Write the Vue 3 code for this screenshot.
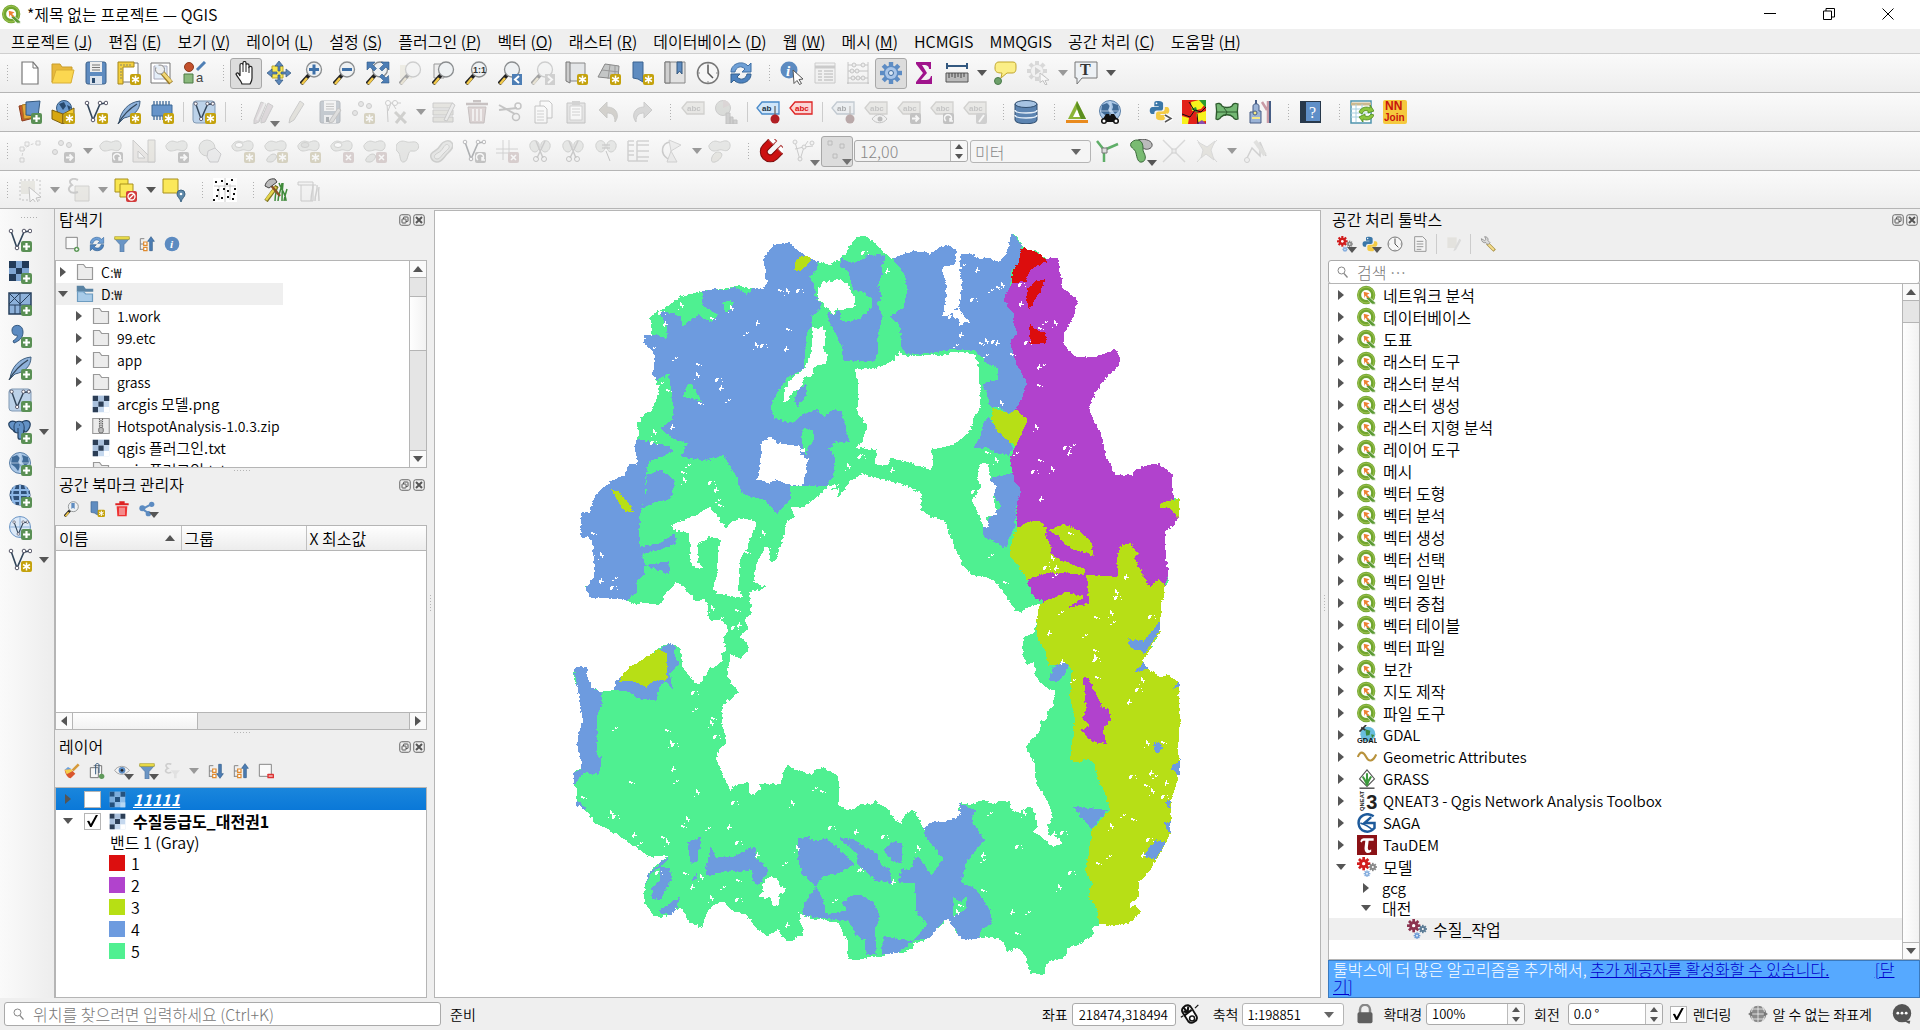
<script setup>
import { h } from 'vue'

const badge = (fill, inner) => `<rect x="13" y="13" width="11" height="11" rx="2" fill="${fill}"/>${inner}`
const star = badge('#c4a20c', '<path d="M18.500 14.500v8M15 16.500l7 4M22 16.500l-7 4" stroke="#fff" stroke-width="1.500"/>')
const plus = badge('#5a9055', '<path d="M18.500 15v7M15 18.500h7" stroke="#fff" stroke-width="2.200"/>')
const cross = badge('#d88', '<path d="M16 16l5 5M21 16l-5 5" stroke="#fff" stroke-width="1.600"/>')
const arrowBadge = badge('#777', '<path d="M15 18.500h6M18.500 15.500l3 3-3 3" stroke="#fff" stroke-width="1.800" fill="none"/>')
const turnBadge = badge('#777', '<path d="M16 21a3.500 3.500 0 1 1 4 0M20 18v3h3" stroke="#fff" stroke-width="1.500" fill="none"/>')
const mag = '<path d="M9 14l-8 9" stroke="#222" stroke-width="4"/><path d="M7 17l-5 6" stroke="#f2c94c" stroke-width="2.500"/><circle cx="14" cy="8.500" r="7.500" fill="#eef1f3" stroke="#8a8d8f" stroke-width="1.300"/>'
const vee = '<path d="M3 3l6 17 7-16 6-1" stroke="#33475b" stroke-width="1.600" fill="none"/><g fill="#fff" stroke="#556" stroke-width="1"><circle cx="3" cy="3" r="1.800"/><circle cx="9" cy="20" r="1.800"/><circle cx="16" cy="3" r="1.800"/><circle cx="22" cy="3" r="1.800"/></g>'
const disk = '<rect x="2" y="1" width="20" height="22" rx="2" fill="#5e8bc0" stroke="#3c6189"/><path d="M6 1h12v10H6z" fill="#eee"/><path d="M8 4h8M8 6.500h8M8 9h8" stroke="#777"/><path d="M6 15h12v8H6z" fill="#dce4ee"/><path d="M8 17h3v5H8z" fill="#2c4c70"/>'
const blob = '<path d="M2 5c3-4 7-3 9-2s4-2 8-1 4 7 1 9-6-1-9 0-7 2-9-1-1-4 0-5z" fill="#c9cfc6" stroke="#8f968c"/>'
const ring = '<ellipse cx="8" cy="6" rx="4" ry="2.500" fill="#fff" stroke="#8f968c"/>'
const dots = '<g fill="#ccc" stroke="#888"><circle cx="4" cy="13" r="2.500"/><circle cx="10" cy="4" r="2.500"/><circle cx="18" cy="6" r="2.500"/></g>'
const tag = (fill, stroke, color, label = 'abc') => `<path d="M1 8l5-6h17v12H6z" fill="${fill}" stroke="${stroke}" stroke-width="1.300"/><text x="6" y="11" font-size="8" font-family="Liberation Sans, sans-serif" font-weight="bold" fill="${color}">${label}</text>`
const greyTag = tag('#d6d3bf', '#9a9784', '#777')
const globe = '<circle cx="12" cy="11" r="10.500" fill="#a8c6e6" stroke="#5b80a8"/><path d="M4 5l5-2 3 3-2 4 3 3-3 6-3-4-4-3zM14 3l6 2 1 6-4 3-3-4 1-3z" fill="#3f6b98"/><path d="M2 11h20M12 1v20" stroke="#d5e4f4" stroke-width=".7"/>'
const scissors = '<path d="M8 2l7 17M17 2L9 19" stroke="#888" stroke-width="1.500"/><circle cx="8" cy="20" r="2.500" fill="none" stroke="#777"/><circle cx="16" cy="20" r="2.500" fill="none" stroke="#777"/>'
const leaves = '<path d="M2 5c2-5 8-4 9 0s-1 8-4 8-6-4-5-8zM22 5c-2-5-8-4-9 0s1 8 4 8 6-4 5-8z" fill="#c9cfc6" stroke="#8f968c"/>'
const feather = '<path d="M2 23C3 12 11 2 23 1c0 9-6 15-16 17z" fill="#8fb2da" stroke="#3f5f80"/><path d="M1 24C6 15 12 9 20 4" stroke="#33475b" fill="none" stroke-width="1.300"/>'
const python = '<path d="M6 8V3c0-2 2-2 5-2s5 1 5 3v5c0 2-1 3-3 3H9c-2 0-3 1-3 4H3c-3-1-3-8 1-8h7V7H6z" fill="#3b77a8"/><path d="M18 8h3c3 1 3 8-1 8h-7v1h5v4c0 2-2 2-5 2s-5-1-5-3v-4c0-2 1-3 3-3h4c2 0 3-1 3-5z" fill="#f4cb45"/><circle cx="8.500" cy="3.800" r="1" fill="#fff"/>'
const cog = (cx, cy, r, c) => {
  let teeth = ''
  for (let k = 0; k < 4; k++) teeth += `<rect x="${cx - r}" y="${cy - r * 0.2}" width="${r * 2}" height="${r * 0.4}" transform="rotate(${k * 45} ${cx} ${cy})" fill="${c}"/>`
  return `${teeth}<circle cx="${cx}" cy="${cy}" r="${r * 0.68}" fill="${c}"/><circle cx="${cx}" cy="${cy}" r="${r * 0.25}" fill="#fff"/>`
}
const tree = '<path d="M2 4v17M2 4h6M2 12h6M2 20h6" stroke="#888" stroke-width="1.500"/><g fill="#fff" stroke="#e08a2e" stroke-width="1.800"><path d="M7 9h5v5H7zM7 17h5v5H7z"/></g>'
const funnel = '<path d="M1 4h22l-8 9v11h-6V13z" fill="#6a95c5" stroke="#557aa3"/><path d="M1 1h22v4H1z" fill="#f0e14a" stroke="#a89c2a"/>'
const checker = '<path d="M1 1h22v22H1z" fill="#c5d8ee"/><path d="M1 1h7v7H1zM16 1h7v7h-7zM8.500 8.500h7v7h-7zM1 16h7v7H1z" fill="#2c3e56"/><path d="M8 1h8v7H8zM1 8h7v8H1z" fill="#a9c0dc"/><path d="M16 16h7v7h-7z" fill="#fff"/>'
const folder = '<path d="M2 22V2h8l3 4h9v16z" fill="#ececec" stroke="#999" stroke-width="1.600"/>'

const icons = {
  qgis: '<circle cx="11" cy="12" r="8.500" fill="none" stroke="#6fa52f" stroke-width="5"/><circle cx="11" cy="12" r="9.500" fill="none" stroke="#97bd4a" stroke-width="1.500"/><path d="M12 12l10 9v2h-4l-7-7z" fill="#5c9a35" stroke="#fff" stroke-width=".8"/><path d="M8 8l7 2-3 2 3 3-2 1-3-3-1 3z" fill="#ee8033"/>',
  newf: '<path d="M4 1h11l5 6v16H4z" fill="#fff" stroke="#777" stroke-width="1.200"/><path d="M15 1v6h5" fill="none" stroke="#777"/>',
  open: '<path d="M1 21V3h8l2 3h10v4H6z" fill="#e8b83b" stroke="#c99d2a"/><path d="M5 9h18l-3 13H1z" fill="#fbd750" stroke="#d8ae35"/>',
  save: disk,
  layout: '<path d="M5 2h16v19H5z" fill="#fff" stroke="#777"/><path d="M1 1h16v5H6v17H1z" fill="#f4d03f" stroke="#a5861c"/><path d="M4 3v2M7 3v2M10 3v2M13 3v2M3 8h2M3 11h2M3 14h2M3 17h2" stroke="#886"/>' + star,
  layman: '<path d="M1 2h19v20H1z" fill="#fff" stroke="#777"/><path d="M4 5h13v13H4z" fill="#e4eef8" stroke="#aab"/><path d="M11 10l10 12" stroke="#9a7a26" stroke-width="5"/><path d="M12 11l9 10" stroke="#f2d775" stroke-width="3"/><circle cx="10" cy="8.500" r="4.500" fill="#eee" stroke="#888"/><path d="M6 4l4 4" stroke="#e4eef8" stroke-width="3"/>',
  style: '<circle cx="6" cy="6" r="4.500" fill="#c4512d" stroke="#8d3a1e"/><path d="M14 9l8-8" stroke="#4f7fb5" stroke-width="3"/><path d="M1 13h9v9H1z" fill="#8ab87c" stroke="#4d7a45"/><text x="13" y="21" font-size="13" font-family="Liberation Sans, sans-serif" fill="#444">a</text>',
  pan: '<path d="M8 23c-1-4-5-7-6-10 1-2 3-1 4 2V4c0-2 3-2 3 0V2c0-2 3-2 3 0v2c0-2 3-1 3 0v2c1-1 3-1 3 1v10c0 3-1 4-2 6z" fill="#fff" stroke="#222" stroke-width="1.200"/><path d="M9 4v7M12 4v7M15 6v6" stroke="#222"/>',
  panTo: '<path d="M5 5h11v12H5z" fill="#f9e64f" stroke="#b9a62f"/><path d="M12 0l4 5h-3v5h-2V5H8zM12 24l4-5h-3v-5h-2v5H8zM0 12l5-4v3h5v2H5v3zM24 12l-5-4v3h-5v2h5v3z" fill="#5b87bb" stroke="#34587f" stroke-width=".7"/>',
  zin: mag + '<path d="M14 3.500v10M9 8.500h10" stroke="#3d70a8" stroke-width="3"/>',
  zout: mag + '<path d="M9 8.500h10" stroke="#3d70a8" stroke-width="3"/>',
  zfull: mag + '<path d="M1 1h8L6.500 3.500l4 4-2.500 2.500-4-4L1 9zM23 1h-8l2.500 2.500-4 4 2.500 2.500 4-4L23 9zM23 22h-8l2.500-2.500-4-4 2.500-2.500 4 4 2.500-2.500z" fill="#4d7eb5" stroke="#2d5988" stroke-width=".6"/>',
  zsel: '<path d="M1 4h12v14H1z" fill="#eadf9c"/>' + mag,
  zlayer: '<path d="M2 3h10v14H2z" fill="#eee" stroke="#999"/>' + mag,
  znative: mag + '<text x="8" y="12" font-size="9" font-weight="bold" font-family="Liberation Sans, sans-serif" fill="#333">1:1</text>',
  zlast: mag + '<path d="M14 13h10v11H14z" fill="#4d7eb5"/><path d="M21 15l-4 3.500 4 3.500" stroke="#fff" stroke-width="2" fill="none"/>',
  znext: mag + '<path d="M14 13h10v11H14z" fill="#999"/><path d="M17 15l4 3.500-4 3.500" stroke="#fff" stroke-width="2" fill="none"/>',
  newmap: '<path d="M3 2h18v18H6z" fill="#e4e6e8" stroke="#888"/><path d="M2 1h4v21l-4-2z" fill="#ccc" stroke="#777"/>' + star,
  new3d: '<path d="M8 3l14 2-1 13-20-2z" fill="#c4c6c6" stroke="#888"/><path d="M5 9l17 2M13 4l-2 14M18 4v13" stroke="#999" fill="none"/>' + star,
  bkm: '<path d="M3 1h10v20l-5-3-5-1z" fill="#5f8cc0" stroke="#3b6391"/>' + star,
  bkms: '<path d="M2 1h20v21H2z" fill="#e2e2e2" stroke="#888"/><path d="M2 1h5v21H2z" fill="#cfcfcf" stroke="#777"/><path d="M14 1h5v12l-2.500-3L14 13z" fill="#5f8cc0" stroke="#34587f"/>',
  clock: '<circle cx="12" cy="12" r="10.500" fill="#f6f6f6" stroke="#777" stroke-width="1.500"/><path d="M12 4v8l5 5" stroke="#555" stroke-width="1.500" fill="none"/><path d="M12 2v2M12 20v2M2 12h2M20 12h2" stroke="#888"/>',
  refresh: '<path d="M2 11C2 2 14-1 19 5l3-3v9h-9l3-3C12 4 7 6 6 11z" fill="#6fa0d6" stroke="#3d6ea5"/><path d="M22 13c0 9-12 12-17 6l-3 3v-9h9l-3 3c4 4 9 2 10-3z" fill="#4d82bf" stroke="#34618f"/>',
  ident: '<circle cx="9" cy="9" r="8.500" fill="#5c8bc1"/><text x="6" y="15" font-size="15" font-style="italic" font-weight="bold" font-family="Liberation Serif, serif" fill="#fff">i</text><path d="M13 9l10 9-4 .5 2.500 4-2 1-2.500-4-3 3z" fill="#fff" stroke="#555"/>',
  table: '<path d="M2 2h20v20H2z" fill="#eee" stroke="#888"/><path d="M2 6h20" stroke="#888" stroke-width="3"/><path d="M5 10h4M5 13h4M5 16h4M5 19h4M11 10h9M11 13h9M11 16h9M11 19h9" stroke="#888" stroke-width="1.500"/>',
  abacus: '<path d="M2 1v22M22 1v22M1 22h22M2 4h20M2 10h20M2 17h20" stroke="#777" fill="none"/><g fill="#ddd" stroke="#777"><circle cx="8" cy="4" r="2"/><circle cx="17" cy="4" r="2"/><circle cx="6" cy="10" r="2"/><circle cx="11" cy="10" r="2"/><circle cx="7" cy="17" r="2"/><circle cx="12" cy="17" r="2"/><circle cx="17" cy="17" r="2"/></g>',
  gear: cog(12, 12, 11, '#5d8cc4') + '<circle cx="12" cy="12" r="6" fill="#a9c5e8"/><circle cx="12" cy="12" r="2.500" fill="#dce8f6" stroke="#3e6ca0"/>',
  sigma: '<path d="M4 1h15v7h-2c0-3-2-4-5-4h-2l5 8-6 7h4c4 0 5-1 6-4h1v8H4v-2l7-9-7-9z" fill="#a0148c"/>',
  ruler: '<path d="M2 5h20M2 2v6M22 2v6" stroke="#33587f" stroke-width="2"/><path d="M1 12h22v9H1z" fill="#bbb" stroke="#555"/><path d="M4 12v5M7 12v4M10 12v5M13 12v4M16 12v5M19 12v4" stroke="#444"/>',
  tip: '<path d="M6 1h14c3 0 3 2 3 5s0 6-4 6h-5l-6 5 1-5c-5 0-7-1-7-5s1-6 4-6z" fill="#fbee87" stroke="#c0a52c"/><circle cx="5" cy="20" r="3.500" fill="#6da06a" stroke="#4a7a4a"/>',
  action: cog(11, 10, 10, '#aaa') + '<circle cx="11" cy="10" r="6" fill="#eee"/><path d="M9 6l6 4-6 4z" fill="#999"/><path d="M14 12l9 7-4 .5 2 4h-2l-2-4-3 2z" fill="#fff" stroke="#777"/>',
  textann: '<path d="M1 1h22v16H8l-5 6v-6H1z" fill="#edf1f5" stroke="#777"/><text x="6" y="14" font-size="16" font-weight="bold" font-family="Liberation Serif, serif" fill="#333">T</text>',
  dsm: '<path d="M1 6l12-2 3 14-12 3z" fill="#c6592e" stroke="#8d3d1c"/><path d="M4 5l12-2 2 14-12 2z" fill="#e7a93c" stroke="#a87820"/><path d="M8 2l14-1-2 15-12-1z" fill="#6794c9" stroke="#35597f"/>' + plus,
  globebox: '<circle cx="13" cy="8" r="7.500" fill="#6c9bcf" stroke="#34587f"/><path d="M8 4l5-2 2 4-3 4zM16 5l4 2-2 4z" fill="#27496d"/><path d="M1 10l11 4v10L1 19z" fill="#d7a711" stroke="#7d6110"/><path d="M12 14l11-6v10l-11 6z" fill="#f3cb35" stroke="#7d6110"/>' + star,
  vnew: vee + star,
  vplus: vee + plus,
  feather: feather + star,
  featherPlus: feather + plus,
  chip: '<path d="M2 5h20v11H2z" fill="#6794c9" stroke="#3d6897"/><path d="M4 1v4M7 1v4M10 1v4M13 1v4M16 1v4M19 1v4M4 16v4M7 16v4M10 16v4M13 16v4" stroke="#3d6897" stroke-width="1.300"/>' + star,
  vbox: '<rect x="1" y="1" width="22" height="22" rx="3" fill="#bcd2e9" stroke="#8199b3"/><g transform="translate(1 1) scale(.9)">' + vee + '</g>' + star,
  vboxPlus: '<rect x="1" y="1" width="22" height="22" rx="3" fill="#bcd2e9" stroke="#8199b3"/><g transform="translate(1 1) scale(.9)">' + vee + '</g>' + plus,
  pencils: '<path d="M2 20L9 2l5 2-7 18-5 2zM9 20l7-17 5 3-8 16-4 1z" fill="#a58" fill-opacity=".5" stroke="#888"/><path d="M5 20l8-17" stroke="#ddd" stroke-width="2"/>',
  pencil: '<path d="M5 18L15 1l4 3L9 20l-5 3z" fill="#cfc59a" stroke="#888"/>',
  saveedit: disk + '<path d="M12 20l8-12 3 2-8 12-4 1z" fill="#bbb" stroke="#777"/>',
  addpt: dots + star,
  vertex: '<path d="M3 3l1 19M7 3l-3 8M3 3h14M8 3l4 6" stroke="#888" fill="none"/><circle cx="4" cy="3" r="2.500" fill="#fff" stroke="#888"/><circle cx="11" cy="3" r="2.500" fill="#fff" stroke="#888"/><path d="M12 23l9-11M11 12l11 11" stroke="#998" stroke-width="3"/>',
  fields: '<path d="M1 3h20v5H1zM1 10h20v5H1zM1 17h20v5H1z" fill="#cfcaa5" stroke="#888"/><path d="M12 20L20 3l3 2-8 16z" fill="#ddd" stroke="#888"/>',
  trash: '<path d="M3 7h18l-2 16H5z" fill="#d99" stroke="#966"/><path d="M1 4h22M8 1h8" stroke="#966" stroke-width="2.500"/><path d="M8 9v12M12 9v12M16 9v12" stroke="#fff" stroke-width="1.500"/>',
  cut: '<path d="M1 5l16 9M1 10l18-2" stroke="#777" stroke-width="2"/><circle cx="20" cy="6" r="3" fill="none" stroke="#777" stroke-width="1.500"/><circle cx="18" cy="17" r="3.500" fill="none" stroke="#777" stroke-width="1.500"/>',
  copy: '<path d="M9 1h9l3 3v14H9z" fill="#fff" stroke="#777"/><path d="M4 6h9l3 3v14H4z" fill="#fff" stroke="#777"/><path d="M6 11h7M6 14h7M6 17h7M6 20h7" stroke="#999"/>',
  paste: '<path d="M3 3h18v20H3z" fill="#ccc" stroke="#777"/><path d="M6 6h12v14H6z" fill="#fff" stroke="#999"/><path d="M8 1h8v4H8z" fill="#999"/><path d="M8 9h8M8 12h8M8 15h8" stroke="#999"/>',
  undo: '<path d="M2 10l8-8v5c10 0 13 9 8 15 0-7-3-9-8-9v5z" fill="#a89878" stroke="#887"/>',
  redo: '<path d="M22 10l-8-8v5C4 7 1 16 6 22c0-7 3-9 8-9v5z" fill="#aaa" stroke="#888"/>',
  label: greyTag,
  diag: '<circle cx="9" cy="8" r="7.500" fill="#a9b9a0" stroke="#888"/><path d="M9 8V0a8 8 0 0 1 7 5z" fill="#c99"/><path d="M12 13h4v11h-4zM16 17h3v7h-3zM19 20h4v4h-4z" fill="#999" stroke="#777"/>',
  labpin: tag('#cfe6fa', '#4a8ac9', '#234', 'ab') + '<path d="M19 6v10" stroke="#777" stroke-width="1.500"/><circle cx="19" cy="19" r="4.500" fill="#b11f24"/>',
  labred: tag('#fbd5d5', '#d22', '#d11'),
  labeye: greyTag + '<path d="M8 19c4-6 11-6 15 0-4 5-11 5-15 0z" fill="#eee" stroke="#777"/><circle cx="16" cy="19" r="2.500" fill="#666"/>',
  labmove: greyTag + arrowBadge,
  labrot: greyTag + turnBadge,
  labedit: greyTag + badge('#999', '<path d="M16 22l5-7" stroke="#fff" stroke-width="2"/>'),
  db: '<path d="M1 4v16c0 5 22 5 22 0V4z" fill="#5c84b1" stroke="#2f4d6e"/><ellipse cx="12" cy="4" rx="11" ry="3.500" fill="#a6c3e2" stroke="#2f4d6e"/><path d="M1 10c0 4 22 4 22 0M1 15c0 4 22 4 22 0" stroke="#e3edf7" fill="none" stroke-width="1.500"/>',
  tri: '<path d="M12 1l9 18H3z" fill="#8bb437"/><path d="M12 9l3 8H8z" fill="#fff"/><path d="M12 1l9 18h-5L11 6z" fill="#5c8f1f"/><path d="M1 20h22v3H1z" fill="#e98a1d"/>',
  bino: globe + '<path d="M8 14h3l1 2 1-2h3l5 8H3z" fill="#111"/><circle cx="6" cy="21" r="3" fill="#111"/><circle cx="18" cy="21" r="3" fill="#111"/><circle cx="6" cy="21" r="1.500" fill="#fff"/><circle cx="18" cy="21" r="1.500" fill="#fff"/>',
  python: '<g transform="scale(.88)">' + python + '</g><path d="M16 15l6 3.500-6 3.500" fill="none" stroke="#fff" stroke-width="4"/><path d="M16 15l6 3.500-6 3.500" fill="none" stroke="#555" stroke-width="1.500"/>',
  pythonSmall: python,
  mosaic: '<path d="M0 0h24v24H0z" fill="#e22118"/><path d="M9 2l8-2 7 3-5 6-9 2zM0 16l7 2-1 6H0zM14 14l10-3v10l-8 1z" fill="#f7f21c"/><path d="M17 0h7v8zM9 9l5-2 2 6z" fill="#2c9a2e"/><path d="M14 24l6-4 4 4z" fill="#8a4fb0"/><path d="M0 14l8 3 5-7 6 2 5-5M12 10L7 2M15 14l1 10" stroke="#111" fill="none"/>',
  green: '<path d="M1 4c2-1 5-1 6 2 2 2 8 2 10 0 1-3 3-3 6-2-1 6-1 9 0 15-2 1-4 0-5-2-3-3-9-3-12 0-1 2-3 3-5 2 1-6 1-9 0-15z" fill="#74b874" stroke="#2c5a2c" stroke-width="1.300"/><path d="M2 12h20M9 8l3 4-2 4" stroke="#2c5a2c" fill="none"/>',
  robot: '<path d="M5 6c0-3 6-3 6 0v5h2v12H2V12h3z" fill="#9bb3d6" stroke="#465d85"/><path d="M8 0v4" stroke="#465d85" stroke-width="2"/><circle cx="7" cy="13" r="2" fill="#f5e886" stroke="#465d85"/><path d="M4 18h8" stroke="#f5e886" stroke-width="2"/><path d="M14 2l5 8M20 1v22" stroke="#c99aa5" stroke-width="2.500"/><path d="M22 1v22" stroke="#465d85" stroke-width="2"/>',
  help: '<path d="M1 1h21v22H1z" fill="#27384b"/><path d="M7 2h14v19H7z" fill="#5f8fc8"/><text x="10" y="18" font-size="16" font-family="Liberation Serif, serif" fill="#fff">?</text>',
  sheet: '<path d="M1 1h20v22H1z" fill="#fff" stroke="#4f94ad" stroke-width="1.500"/><path d="M1 4h20" stroke="#cbb98f" stroke-width="3"/><path d="M1 9h20M1 13h20M1 17h20M6 4v18M12 4v18" stroke="#a8d0e0"/><path d="M9 12c2-5 8-6 11-4V5l4 6-6 2v-2c-3-1-5 0-6 3zM24 15c-2 5-8 6-11 4v3l-4-5 6-3v2c3 1 5 0 6-2z" fill="#8cc63f" stroke="#4d8a1c" stroke-width=".8"/>',
  nn: '<rect width="24" height="24" rx="2" fill="#f5c93e"/><text x="2" y="10" font-size="12" font-weight="bold" font-family="Liberation Sans, sans-serif" fill="#c8140c">NN</text><text x="1" y="21" font-size="10" font-weight="bold" font-family="Liberation Sans, sans-serif" fill="#c8140c">Join</text>',
  arc: '<path d="M4 22C3 12 8 5 20 4" fill="none" stroke="#999" stroke-dasharray="3 2"/><g fill="#eee" stroke="#999"><path d="M2 19h4v4H2zM2 8h4v4H2zM7 3h4v4H7zM18 2h4v4h-4z"/></g>',
  ptmove: dots + arrowBadge,
  brot: blob + turnBadge,
  setsq: '<path d="M1 1v22h22zM6 12l7 7H6z" fill="#ddd0c0" fill-rule="evenodd" stroke="#888"/><path d="M16 1h7v22h-7z" fill="#ddd0a5" stroke="#888"/>',
  bscale: blob + arrowBadge,
  simplify: '<circle cx="9" cy="9" r="8" fill="#c9cfc6" stroke="#8f968c"/><path d="M10 12l7-3 6 6-3 8h-8l-3-5z" fill="#d5dbe2" stroke="#889"/>',
  bring: blob + ring + star,
  bpart: blob + '<path d="M3 20c3-5 7-6 9-4s-2 7-5 7-5 0-4-3z" fill="#c9cfc6" stroke="#8f968c"/>' + star,
  bfill: blob + '<ellipse cx="8" cy="6" rx="4" ry="2.500" fill="#b5bdb1" stroke="#8f968c"/>' + star,
  bringx: blob + ring + cross,
  bpartx: blob + '<path d="M3 20c3-5 7-6 9-4s-2 7-5 7-5 0-4-3z" fill="#c9cfc6" stroke="#8f968c"/>' + cross,
  reshape: '<path d="M1 5c3-4 7-3 10-2s9-2 11 2-1 8-6 7-3 10-8 11-3-8-6-10-2-6-1-8z" fill="#c9cfc6" stroke="#8f968c"/>',
  offset: '<path d="M3 14c3-3 5-2 8-7s9-7 12-3-2 8-5 11-5 8-10 8-8-6-5-9z" fill="#c9cfc6" stroke="#8f968c" stroke-width="1.500"/><path d="M6 16c3-3 5-2 8-7s5-4 6-2-2 4-5 7-4 6-7 6-3-3-2-4z" fill="#dde0d8" stroke="#8f968c"/>',
  vrot: vee + turnBadge,
  trimx: '<path d="M8 1v20M14 1v20M1 10h22M1 14h22" stroke="#999"/>' + cross,
  split1: leaves + scissors,
  merge: leaves + '<path d="M8 6h8M8 9h8M12 12l4 10" stroke="#777" fill="none"/>',
  combs: '<path d="M1 2h6M1 6h6M1 12h6M1 16h6M10 2h12M10 6h12M10 12h12M10 18h12M1 22h20M10 2v20M1 2v20" stroke="#999" fill="none" stroke-width="1.500"/>',
  rotp: '<path d="M8 20C-1 14 2 4 10 3" fill="none" stroke="#888" stroke-width="1.500"/><path d="M9 1l12 5-10 6zM11 12l6 11H7z" fill="#ddd" stroke="#999"/>',
  bsplit: blob + '<path d="M4 18c2-5 6-6 9-4s-2 8-6 9-4-2-3-5z" fill="#d8cfae" stroke="#8f968c"/>',
  magnet: '<g transform="rotate(45 12 12)"><path d="M2 5v8a10 10 0 0 0 20 0V5h-7v8a3 3 0 0 1-6 0V5z" fill="#cc1111" stroke="#7d0a0a"/><path d="M2 1h7v5H2zM15 1h7v5h-7z" fill="#fff" stroke="#a33"/></g>',
  snapv: '<path d="M3 3l5 18M12 8l-4 13M12 8l4-6M12 8l9-1M3 10l9-2" stroke="#888" fill="none"/><g fill="#eee" stroke="#888"><circle cx="3" cy="3" r="2"/><circle cx="12" cy="8" r="2"/><circle cx="8" cy="20" r="2"/><circle cx="20" cy="4" r="2"/></g>',
  snapd: '<g fill="#ddd" stroke="#888"><path d="M3 2h4v4H3zM15 5h4v4h-4zM8 15h4v4H8z"/></g>',
  topo: '<path d="M1 2l7 9v12M8 11l14-6" stroke="#5fae68" stroke-width="2.500" fill="none"/><path d="M6 9h5v5H6z" fill="#ddd" stroke="#777"/>',
  overlap: '<path d="M9 1c5-2 13 0 14 4s-4 6-7 5-9-6-7-9z" fill="#bbb" stroke="#555"/><path d="M2 4c3-4 9-4 11 0s0 7 2 10 2 8-2 9-5-4-6-9-7-5-5-10z" fill="#79bb72" stroke="#3a6a3a"/>',
  xsnap: '<path d="M1 1l22 22M23 1L1 23" stroke="#aaa" stroke-width="1.500"/><path d="M10 10h4v4h-4z" fill="#ddd" stroke="#999"/>',
  bolt: '<path d="M2 1l20 22M22 1L2 23" stroke="#aaa"/><path d="M3 3l9 5 8-6-4 9 3 10-8-6-5 4 2-8z" fill="#d0c8a0" stroke="#aaa"/>',
  trace: '<path d="M3 21l6-12 8 8V3l6 14" fill="none" stroke="#999" stroke-width="1.500"/><circle cx="4" cy="21" r="2.500" fill="#eee" stroke="#999"/><path d="M12 2l10 14" stroke="#c0c0b0" stroke-width="4"/>',
  select: '<path d="M2 2h20v20H2z" fill="none" stroke="#777" stroke-dasharray="2 2"/><path d="M3 3h14v13H3z" fill="#d6d0a8"/><path d="M11 9l12 10-5 1 2 4-2 1-3-4-3 3z" fill="#fff" stroke="#777"/>',
  eps: '<path d="M9 8h14v15H9z" fill="#ddd6b4" stroke="#998"/><path d="M12 2C6-1 1 3 6 7c-6 3-3 10 6 7" fill="none" stroke="#888" stroke-width="2"/>',
  desel: '<path d="M1 1h13v13H1z" fill="#f9e64f" stroke="#a8901c"/><path d="M6 6h13v13H6z" fill="#fbe85a" stroke="#a8901c"/><rect x="12" y="13" width="11" height="11" rx="2" fill="#d23b3b"/><circle cx="17.500" cy="18.500" r="3.500" fill="none" stroke="#fff" stroke-width="1.300"/><path d="M15 21l5-5" stroke="#fff" stroke-width="1.300"/>',
  selloc: '<path d="M1 1h15v14H1z" fill="#fbe85a" stroke="#a8901c"/><path d="M19 24c-1-4-4-5-4-8a4 4 0 0 1 8 0c0 3-3 4-4 8z" fill="#5d88a8" stroke="#3d6484"/><circle cx="19" cy="16" r="1.300" fill="#fff"/>',
  scatter: '<path d="M0 0h24v24H0z" fill="#fff"/><path d="M12 0v24M17 6v16M1 8h22M6 8v14" stroke="#bbb" stroke-width=".8"/><path d="M2 3h2v2H2zM8 2h2v2H8zM18 1h2v2h-2zM21 10h2v2h-2zM4 11h2v2H4zM10 10h2v2h-2zM14 12h2v2h-2zM3 17h2v2H3zM8 19h2v2H8zM14 18h2v2h-2zM19 20h2v2h-2zM20 15h2v2h-2zM13 5h2v2h-2zM0 21h2v2H0z" fill="#111"/>',
  hammer: '<path d="M11 23c0-8 2-10 2-15M14 23c0-8 4-12 4-18M18 23c0-7 0-10 1-18M22 23c0-7-5-12-7-18M20 23c1-6 2-9 3-12" stroke="#3f8a3a" fill="none" stroke-width="1.500"/><path d="M2 23L13 8" stroke="#7d7320" stroke-width="4"/><path d="M2 22L12 9" stroke="#e4d44c" stroke-width="2.500"/><path d="M5 5l11 13" stroke="#8a5426" stroke-width="2.500"/><path d="M1 8c1-5 5-8 10-7l2 3-8 6z" fill="#bbb" stroke="#444"/>',
  grassr: '<path d="M1 4h15v19H4V7H1zM4 7h15" fill="#eee" stroke="#888"/><path d="M14 23c0-8 2-10 2-16M18 23c0-8 3-10 2-16M22 23c0-7-1-8 0-14" stroke="#999" fill="none" stroke-width="1.500"/>',
  rasterPlus: '<path d="M1 1h20v20H1z" fill="#7ea5d2"/><path d="M1 1h7v7H1zM14 1h7v7h-7zM8 8h6v6H8zM1 14h7v7H1z" fill="#223b59"/>' + plus,
  meshPlus: '<path d="M1 1h22v21H1z" fill="#8db1da" stroke="#263f5c" stroke-width="1.500"/><path d="M1 1l11 11M12 1L1 12M12 12L23 1M12 1v21M1 13h22M7 13v9" stroke="#263f5c" fill="none"/>' + plus,
  comma: '<path d="M4 6c0-6 11-7 11 2 0 6-4 9-9 11l-1-2c3-2 5-4 4-6-3 1-5-1-5-5z" fill="#5c8bc1" stroke="#34587f"/>' + plus,
  pg: '<path d="M1 3c2-3 5-2 7-1 2-1 4-1 6 0 3-2 7-2 8 1s-2 8-4 9c-1 0-2-1-2-2-1 2 0 4-1 7s-5 3-5 0v-4c-2 0-4-1-5-3C3 9 0 6 1 3z" fill="#6392c6" stroke="#223f60" stroke-width="1.200"/><path d="M8 2C5 5 6 9 7 12M14 2c3 3 2 7 2 9M10 13V8M11 5h1" stroke="#223f60" fill="none"/>' + plus,
  globePlus: globe + plus,
  gridPlus: '<circle cx="12" cy="11" r="10.500" fill="#2f5078"/><path d="M3 6h18M2 11h20M4 17h16M12 1v20M7 2c-4 6-4 12 0 18M17 2c4 6 4 12 0 18" stroke="#8db7e6" stroke-width="2" fill="none"/>' + plus,
  wfsPlus: '<circle cx="12" cy="11" r="10.500" fill="#dce9f7" stroke="#6d97c6"/><path d="M2 11h20M12 1v20" stroke="#8db1da"/><g transform="translate(4 4) scale(.7)">' + vee + '</g>' + plus,
  addl: '<path d="M3 2h17v17H3z" fill="#fafafa" stroke="#777" stroke-width="1.300"/><circle cx="19" cy="20" r="4" fill="#5f9a5a"/><path d="M19 18v4M17 20h4" stroke="#fff" stroke-width="1.300"/>',
  funnel,
  collapse: tree + '<path d="M18 1l5 7h-3v14h-4V8h-3z" fill="#4d7eb5" stroke="#2d5988"/>',
  expand: tree + '<path d="M18 23l5-7h-3V2h-4v14h-3z" fill="#4d7eb5" stroke="#2d5988"/>',
  info: '<circle cx="12" cy="12" r="11" fill="#5c8bc1"/><text x="9" y="18" font-size="17" font-style="italic" font-weight="bold" font-family="Liberation Serif, serif" fill="#fff">i</text>',
  folder,
  folderOpen: '<path d="M1 1h9l3 4h10v4H1z" fill="#5a83a3"/><path d="M2 22V9h8l3 3h9v10z" fill="#a8cbe8" stroke="#6d9cc0" stroke-width="1.600"/>',
  checker,
  zip: '<path d="M1 2h22v20H1z" fill="#ececec" stroke="#999" stroke-width="1.500"/><path d="M10 2v12M12 4v12M14 2v12" stroke="#666" stroke-width="1.500" stroke-dasharray="2 1"/><rect x="9" y="14" width="6" height="7" rx="2" fill="#bbb" stroke="#555"/>',
  zbook: mag + '<path d="M11 3h5v9l-2.500-2L11 12z" fill="#5f8cc0"/>',
  trashRed: '<path d="M4 8h16l-1 15H5z" fill="#e33" /><path d="M2 5h20M8 2h8" stroke="#d22" stroke-width="3"/><path d="M9 10v11M12 10v11M15 10v11" stroke="#fff" stroke-width="1.300"/>',
  share: '<path d="M20 4L5 12l12 8" stroke="#5c8bc1" stroke-width="3" fill="none"/><circle cx="19" cy="5" r="4" fill="#5c8bc1"/><circle cx="5" cy="11" r="4.500" fill="#5c8bc1"/><circle cx="14" cy="19" r="4" fill="#5c8bc1"/>',
  brush: '<path d="M13 11l9-9" stroke="#d69a3b" stroke-width="4"/><path d="M1 10l9-1 7 7-7 7C5 22 2 17 1 10z" fill="#d9562e"/><path d="M1 10l9-1 3 3-9 5z" fill="#f4cf4d"/><path d="M1 10l5-4 5 3z" fill="#6aa0dc"/>',
  addgroup: '<path d="M2 7h12v15H2zM7 4h12v15" fill="#f6f6f6" stroke="#777" stroke-width="1.500"/><path d="M10 17V3c0-3 5-3 5 0v12" fill="none" stroke="#33587f" stroke-width="1.500"/><circle cx="19" cy="20" r="4" fill="#5f9a5a"/>',
  eye: '<path d="M1 11c5-8 16-8 22 0-6 8-17 8-22 0z" fill="#f2f2f2" stroke="#999" stroke-width="1.300"/><circle cx="12" cy="11" r="5" fill="#5c8bc1"/><circle cx="12" cy="11" r="2" fill="#222"/>',
  epsf: '<path d="M11 2C4-1 0 4 6 8c-7 3-3 9 5 6" fill="none" stroke="#999" stroke-width="2.500"/><path d="M10 11h14l-5 6v6h-4v-6z" fill="#ccc"/>',
  removel: '<path d="M2 2h18v18H2z" fill="#fafafa" stroke="#777" stroke-width="1.300"/><rect x="14" y="16" width="10" height="7" rx="1" fill="#d33"/><path d="M16 19.500h6" stroke="#fff" stroke-width="1.500"/>',
  models: cog(8, 8, 8, '#d11d1d') + cog(19, 12, 5, '#888') + cog(12, 20, 4, '#86aede'),
  model2: cog(8, 8, 8, '#8c3350') + cog(19, 12, 5, '#5b7b95') + cog(12, 20, 4, '#6a9bd6'),
  doc: '<path d="M4 1h12l5 5v17H4z" fill="#f4f4f4" stroke="#999" stroke-width="1.500"/><path d="M7 8h10M7 12h10M7 16h10M7 20h7" stroke="#999" stroke-width="1.500"/>',
  editp: '<path d="M2 2h14v16H2z" fill="#d6d0a8"/><path d="M12 20l8-16 3 2-8 15-4 2z" fill="#bbb"/>',
  wrench: '<path d="M11 11l11 11" stroke="#a48a3a" stroke-width="5"/><path d="M12 12l9 9" stroke="#f4dd8d" stroke-width="3"/><path d="M2 4c0 4 3 7 7 6l3 3 3-3-3-3c1-4-2-6-5-6l2 4-2 2z" fill="#ddd" stroke="#777"/>',
  gdal: '<circle cx="13" cy="11" r="9" fill="#69bede"/><path d="M10 5l6 2-1 5-4 1zM17 11l4 1-3 4z" fill="#3b8a3f"/><path d="M3 8l8-8M5 3l5 3" stroke="#333" stroke-width="2"/><text x="0" y="22" font-size="9" font-weight="bold" font-family="Liberation Sans, sans-serif" fill="#111">GDAL</text>',
  wave: '<path d="M1 12c3-8 7-6 10 0s8 6 12-3" fill="none" stroke="#b8923c" stroke-width="2.500"/>',
  grass: '<path d="M12 1l9 11-9 9-9-9z" fill="#fff" stroke="#555" stroke-width="1.300"/><path d="M12 20c-1-6-4-8-5-11M12 20V5M12 20c1-6 3-8 5-11" stroke="#3c9a3c" stroke-width="2.500" fill="none"/><path d="M3 23h18" stroke="#333" stroke-width="1.500"/>',
  qneat: '<text transform="translate(8 24) rotate(-90)" font-size="7" font-weight="bold" font-family="Liberation Sans, sans-serif" fill="#222">QNEAT</text><text x="11" y="21" font-size="24" font-weight="bold" font-family="Liberation Sans, sans-serif" fill="#222">3</text>',
  saga: '<path d="M20 4C11-2 1 4 2 13s12 13 19 5v-6H9l8-7" fill="none" stroke="#1d5a9b" stroke-width="3"/><path d="M4 12c6 2 10 4 14 8" stroke="#1d5a9b" stroke-width="2" fill="none"/>',
  tau: '<path d="M0 0h24v24H0z" fill="#8b1216"/><path d="M4 8c1-4 3-4 6-4h10v3h-6l-1 8c0 4 2 4 4 2v3c-4 3-8 2-8-4l1-9c-3 0-4 0-4 2z" fill="#fff"/>',
  search: '<circle cx="9" cy="9" r="7" fill="none" stroke="#888" stroke-width="2"/><path d="M14 15l7 8" stroke="#888" stroke-width="2.500"/>',
  float: '<rect x="1.500" y="1.500" width="21" height="21" rx="4" fill="none" stroke="#666" stroke-width="2"/><rect x="9" y="6" width="9" height="9" rx="1" fill="none" stroke="#555" stroke-width="2"/><rect x="6" y="10" width="8" height="8" rx="1" fill="#efefef" stroke="#555" stroke-width="2"/>',
  close: '<rect x="1.500" y="1.500" width="21" height="21" rx="4" fill="none" stroke="#666" stroke-width="2"/><path d="M6 6l12 12M18 6L6 18" stroke="#555" stroke-width="4"/>',
  mouse: '<path d="M4 4c4-4 8-3 10 1l6 10c2 5-6 10-10 6L3 10c-1-2-1-4 1-6z" fill="#fff" stroke="#111" stroke-width="2.200"/><path d="M4 9l5 1 1-7M4 4l5 6M5 14l9-7" stroke="#111" stroke-width="2.500" fill="none"/><circle cx="14.500" cy="17.500" r="3" fill="none" stroke="#111" stroke-width="1.800"/><path d="M18 5l4-4M1 16l3-2" stroke="#111" stroke-width="1.500"/>',
  lock: '<path d="M6 11V7c0-8 12-8 12 0v4" fill="none" stroke="#888" stroke-width="3"/><rect x="3" y="10" width="18" height="13" rx="2" fill="#5f5f5f"/>',
  crs: '<circle cx="12" cy="12" r="10" fill="#8a8a8a"/><path d="M2 12h20M12 2v20M4 6h16M4 18h16M7 3c-4 6-4 12 0 18M17 3c4 6 4 12 0 18" stroke="#efefef" fill="none"/><path d="M0 12l5-3v6zM24 12l-5-3v6z" fill="#777"/>',
  chat: '<circle cx="12" cy="11" r="11" fill="#555"/><path d="M14 20h8l-1 4z" fill="#555"/><circle cx="7" cy="11" r="1.700" fill="#fff"/><circle cx="12" cy="11" r="1.700" fill="#fff"/><circle cx="17" cy="11" r="1.700" fill="#fff"/>',
  min: '<path d="M0 11h24" stroke="#000" stroke-width="2"/>',
  restore: '<path d="M1 6h16v17H1zM6 6V1h17v17h-6" fill="none" stroke="#000" stroke-width="2"/>',
  quit: '<path d="M1 1l22 22M23 1L1 23" stroke="#000" stroke-width="2"/>',
}

const Glyph = (props) => h('svg', { viewBox: '0 0 24 24', 'aria-hidden': 'true', innerHTML: icons[props.name] })
Glyph.props = ['name']

// Tool entries: name, followed by flags. o = disabled, p = pressed, m = corner menu, d = drop-down arrow.
const parse = (text) => text.split(' ').map((token) => {
  const [name, flags = ''] = token.split(':')
  return { name, off: flags.includes('o'), on: flags.includes('p'), menu: flags.includes('m'), drop: flags.includes('d') }
})
const rows = [
  ['newf open save layout layman style', 'pan:p panTo zin zout zfull zsel:o zlayer znative zlast znext:o newmap new3d bkm bkms clock refresh', 'ident table:o abacus:o gear:p sigma ruler:d tip action:od textann:d'],
  ['dsm globebox vnew feather chip | vbox |', 'pencils:om pencil:o saveedit:o addpt:o vertex:od fields:o trash:o cut:o copy:o paste:o undo:o redo:o', 'label:o diag:o | labpin labred | labpin:o labeye:o labmove:o labrot:o labedit:o', 'db', 'tri bino', 'python mosaic green robot', 'help', 'sheet nn'],
  ['arc:o ptmove:od brot:o setsq:o bscale:o simplify:o bring:o bpart:o bfill:o bringx:o bpartx:o reshape:o offset:o vrot:o trimx:o split1:o split1:o merge:o combs:o rotp:od bsplit:o', 'magnet snapv:om snapd:opm units topo overlap:m xsnap:o bolt:od trace:o'],
  ['select:od eps:od desel:d selloc', 'scatter', 'hammer grassr:o'],
].map((row) => row.map(parse))

const menus = [['프로젝트', 'J'], ['편집', 'E'], ['보기', 'V'], ['레이어', 'L'], ['설정', 'S'], ['플러그인', 'P'], ['벡터', 'O'], ['래스터', 'R'], ['데이터베이스', 'D'], ['웹', 'W'], ['메시', 'M'], ['HCMGIS'], ['MMQGIS'], ['공간 처리', 'C'], ['도움말', 'H']]
const sideTools = parse('vplus rasterPlus meshPlus comma featherPlus vboxPlus pg:d globePlus gridPlus wfsPlus vnew:d')

const files = [
  { label: 'C:₩', icon: 'folder', arrow: 'right', depth: 0 },
  { label: 'D:₩', icon: 'folderOpen', arrow: 'down', depth: 0, hover: true },
  { label: '1.work', icon: 'folder', arrow: 'right', depth: 1 },
  { label: '99.etc', icon: 'folder', arrow: 'right', depth: 1 },
  { label: 'app', icon: 'folder', arrow: 'right', depth: 1 },
  { label: 'grass', icon: 'folder', arrow: 'right', depth: 1 },
  { label: 'arcgis 모델.png', icon: 'checker', depth: 1, mixed: true },
  { label: 'HotspotAnalysis-1.0.3.zip', icon: 'zip', arrow: 'right', depth: 1 },
  { label: 'qgis 플러그인.txt', icon: 'checker', depth: 1, mixed: true },
  { label: 'qgis 플러그인.txt', icon: 'folder', depth: 1, mixed: true },
]
const classes = [['1', '#dc0f0f'], ['2', '#b143cd'], ['3', '#b7df14'], ['4', '#6d9bdf'], ['5', '#50f091']]

const algs = [
  ...['네트워크 분석', '데이터베이스', '도표', '래스터 도구', '래스터 분석', '래스터 생성', '래스터 지형 분석', '레이어 도구', '메시', '벡터 도형', '벡터 분석', '벡터 생성', '벡터 선택', '벡터 일반', '벡터 중첩', '벡터 테이블', '벡터 파일', '보간', '지도 제작', '파일 도구'].map((label) => ({ label, icon: 'qgis' })),
  { label: 'GDAL', icon: 'gdal', latin: true },
  { label: 'Geometric Attributes', icon: 'wave', latin: true },
  { label: 'GRASS', icon: 'grass', latin: true },
  { label: 'QNEAT3 - Qgis Network Analysis Toolbox', icon: 'qneat', latin: true },
  { label: 'SAGA', icon: 'saga', latin: true },
  { label: 'TauDEM', icon: 'tau', latin: true },
  { label: '모델', icon: 'models', open: true },
]

// Water quality zones in raster cells, one list per class.
const land = 'M610 208L620 190 618 150 608 122 630 88 640 75 665 70 690 66 700 82 730 104 756 118 775 125 808 136 838 118 860 95 880 62 900 46 920 50 945 70 975 102 998 118 1020 105 1060 92 1095 94 1110 102 1125 98 1145 78 1165 75 1185 85 1188 96 1203 103 1240 102 1245 113 1290 113 1300 123 1325 123 1337 100 1347 75 1353 38 1365 45 1385 75 1390 83 1415 93 1430 93 1445 105 1460 117 1480 114 1495 118 1497 150 1505 175 1507 205 1525 215 1530 226 1545 228 1551 245 1545 280 1530 310 1515 333 1511 365 1520 385 1535 400 1550 412 1600 412 1630 402 1660 390 1672 392 1682 420 1675 440 1650 460 1625 490 1605 520 1588 565 1600 600 1625 650 1630 670 1636 705 1655 740 1667 766 1717 766 1730 748 1760 735 1795 731 1820 748 1838 765 1836 795 1842 835 1857 835 1857 895 1840 915 1815 935 1817 1000 1826 1070 1822 1092 1813 1100 1812 1130 1803 1150 1800 1235 1788 1260 1765 1295 1748 1325 1760 1345 1785 1360 1805 1375 1820 1362 1855 1385 1857 1430 1860 1500 1853 1605 1862 1620 1855 1660 1850 1690 1832 1745 1833 1790 1828 1850 1810 1880 1788 1920 1765 1960 1738 1985 1738 2025 1712 2050 1708 2062 1720 2065 1728 2058 1742 2075 1725 2085 1715 2105 1680 2115 1650 2110 1618 2113 1600 2120 1597 2150 1575 2160 1555 2175 1522 2182 1520 2205 1500 2218 1480 2220 1457 2235 1455 2263 1412 2263 1405 2235 1395 2210 1375 2182 1345 2195 1338 2185 1335 2170 1310 2155 1285 2150 1260 2155 1205 2155 1185 2130 1163 2092 1145 2115 1120 2135 1110 2150 1085 2165 1065 2165 1055 2185 1030 2198 985 2200 960 2210 925 2212 900 2220 865 2218 863 2165 845 2130 838 2110 790 2100 785 2093 770 2100 730 2085 715 2080 722 2110 733 2130 728 2145 715 2150 692 2165 670 2155 655 2130 620 2150 585 2120 560 2085 530 2075 515 2070 490 2045 460 2055 445 2070 432 2100 428 2125 385 2105 370 2070 345 2065 330 2085 300 2090 280 2088 262 2060 252 2040 255 1995 262 1965 290 1935 325 1908 270 1910 240 1890 180 1850 130 1820 105 1812 85 1780 52 1750 50 1710 38 1690 38 1665 45 1653 65 1645 60 1610 50 1565 66 1550 68 1500 63 1440 52 1395 42 1380 42 1350 48 1337 80 1342 82 1370 95 1402 120 1416 160 1410 175 1385 210 1340 250 1320 295 1285 315 1272 345 1275 360 1285 368 1340 390 1370 412 1393 425 1385 440 1358 460 1340 490 1322 483 1305 490 1295 500 1288 490 1270 492 1255 505 1225 480 1200 443 1198 445 1160 435 1135 410 1145 385 1120 370 1100 345 1088 330 1110 310 1130 305 1152 250 1150 215 1152 200 1138 150 1135 90 1133 75 1100 100 1080 103 1040 97 965 80 950 62 950 65 875 90 880 100 840 120 810 160 780 190 770 207 732 235 730 228 700 230 655 238 640 230 612 262 575 275 575 285 545 298 520 290 485 280 470 282 400 265 385 252 370 255 345 275 345 270 290 290 275 320 262 360 230 415 215 460 208 500 205 540 195 555 205 580 203Z'
const lake = 'M510 1300L510 1320 503 1350 505 1375 535 1415 520 1432 490 1450 485 1500 500 1570 480 1585 467 1615 485 1655 505 1700 512 1715 525 1695 570 1688 565 1715 575 1724 605 1708 598 1692 660 1694 670 1660 680 1634 700 1645 755 1664 765 1648 795 1644 830 1665 838 1690 838 1755 860 1770 880 1768 905 1752 930 1752 945 1742 985 1770 1005 1800 1025 1812 1035 1785 1055 1770 1070 1778 1090 1830 1120 1808 1150 1808 1180 1795 1200 1785 1197 1747 1230 1755 1260 1742 1290 1745 1310 1752 1325 1742 1350 1742 1355 1770 1380 1778 1395 1765 1410 1758 1425 1780 1433 1820 1420 1835 1440 1845 1455 1862 1480 1880 1505 1870 1500 1855 1465 1845 1463 1820 1478 1785 1465 1750 1450 1720 1428 1690 1425 1630 1415 1610 1398 1580 1415 1560 1440 1530 1442 1505 1460 1500 1462 1475 1478 1460 1487 1412 1460 1405 1435 1380 1425 1365 1422 1325 1402 1335 1388 1310 1388 1255 1425 1235 1432 1190 1440 1150 1400 1165 1383 1178 1360 1165 1340 1130 1320 1105 1305 1085 1280 1072 1235 1065 1205 1030 1185 980 1165 935 1157 903 1110 890 1082 865 1082 820 1040 798 980 780 930 768 905 762 870 785 830 835 838 805 812 810 840 792 800 800 770 835 725 862 690 862 705 890 680 905 668 960 655 990 648 1025 625 1022 632 985 615 980 590 1030 580 1085 615 1100 600 1112 575 1110 568 1130 575 1180 555 1200 565 1225 540 1250 560 1270 567 1285 545 1315 525 1310Z'
const blue = [
  'M610 208L620 190 618 150 608 122 630 88 640 75 690 66 700 82 735 105 756 118 775 125 770 150 745 175 765 195 765 225 785 255 770 280 755 285 755 320 740 340 735 400 730 450 680 475 650 520 632 560 640 595 700 610 720 590 765 568 795 590 815 568 845 575 868 665 830 665 805 685 825 710 820 765 800 797 740 797 690 797 692 835 650 882 620 845 545 820 530 770 490 705 440 722 365 710 380 670 345 657 325 645 300 625 335 600 340 570 335 520 325 460 290 480 280 470 282 400 265 385 252 370 255 345 285 345 323 355 320 320 300 275 330 278 360 290 368 318 415 285 455 305 475 285 425 255 425 215 460 208 500 210 525 200 560 225 580 203Z',
  'M235 730L265 725 340 695 330 680 270 665 230 655 225 690Z',
  'M235 730L265 725 260 760 255 830 242 870 238 940 243 1000 255 1030 250 1070 232 1080 232 1115 200 1140 150 1135 90 1133 75 1105 103 1070 103 1040 97 965 80 950 62 950 65 875 90 880 100 840 120 810 160 780 190 770 207 732Z',
  'M262 765L300 748 340 775 342 800 330 838 290 845 245 865 257 820ZM243 978L300 970 345 938 348 970 295 990 243 1005ZM255 1035L328 1025 328 1065Z',
  'M840 115L885 132 930 103 975 108 965 140 965 165 955 195 965 230 950 250 968 290 955 340 955 395 945 422 850 424 845 380 820 330 805 300 800 270 820 285 840 270 840 300 870 306 900 295 935 265 935 235 905 213 880 210 865 155 840 140Z',
  'M998 118L1020 105 1060 92 1095 94 1110 102 1145 78 1165 75 1185 85 1203 103 1240 102 1245 113 1290 113 1300 123 1325 123 1337 100 1347 75 1353 38 1385 75 1378 130 1355 150 1350 200 1330 240 1360 280 1362 320 1373 335 1350 370 1370 430 1400 490 1385 540 1365 570 1340 580 1320 562 1290 560 1280 520 1268 490 1315 478 1313 445 1280 430 1260 405 1240 390 1170 388 1110 400 1040 402 1025 385 1020 315 988 290 1030 265 1042 210 1035 165Z',
  'M1290 590L1300 610 1360 680 1350 705 1310 700 1280 682 1240 685 1260 650 1270 610ZM1265 780L1360 758 1365 790 1385 812 1370 850 1365 920 1345 960 1340 985 1300 965 1268 950 1268 915 1325 858Z',
  'M42 1350L48 1337 80 1342 82 1370 95 1402 125 1420 125 1450 112 1490 112 1600 125 1615 118 1665 85 1658 60 1668 45 1695 38 1690 38 1660 65 1645 50 1565 68 1500 52 1395ZM162 1410L165 1385 300 1288 325 1270 345 1278 342 1300 360 1335 330 1360 337 1410 320 1385 300 1395 290 1440 270 1440 235 1435 205 1415ZM50 1740L85 1772 52 1755Z',
  'M382 1867L425 1852 412 1925 392 1930ZM435 1965L452 1878 465 1910 520 1912 570 1882 590 1885 582 1910 627 1950 595 1995 578 1980 575 1950 545 1955 500 1952 460 1965ZM300 1940L330 1945 335 1980 300 2040 275 2035 275 2005 300 1980ZM300 2070L362 2028 355 2050 335 2085 300 2080ZM325 1908L262 1965 255 1995 268 1965 325 1918ZM395 1980L412 1960 412 1980Z',
  'M715 1855L745 1850 765 1862 800 1855 885 1933 840 1958 785 1970 768 2000 790 2040 800 2085 860 2070 848 2050 870 2025 905 2025 940 2045 960 2090 945 2130 950 2205 918 2205 915 2160 890 2150 870 2105 790 2095 730 2085 728 2060 768 2000 725 1960 715 1915ZM840 1852L880 1858 950 1900 965 1935 990 1945 993 1990 945 1980 895 1935 890 1900 845 1862ZM970 1890L1005 1862 1025 1870 1027 1930 1000 1925Z',
  'M1090 1825L1115 1805 1150 1808 1200 1785 1198 1748 1245 1772 1235 1800 1272 1860 1215 1930 1212 1965 1200 1985 1245 2005 1290 2070 1295 2112 1262 2130 1260 2155 1205 2157 1162 2093 1105 2155 1065 2160 1015 2198 965 2203 970 2150 1060 2162 1102 2112 1070 2080 1065 1990 1015 1990 1025 1945 1050 1950 1070 1905 1115 1965 1150 1915 1095 1850Z',
]
const purple = 'M1462 117L1480 114 1495 118 1497 150 1505 175 1507 205 1525 215 1530 226 1545 228 1551 245 1545 280 1530 310 1515 333 1511 365 1520 385 1535 400 1550 412 1600 412 1630 402 1660 390 1672 392 1682 420 1675 440 1650 460 1625 490 1605 520 1588 565 1600 600 1625 650 1630 670 1636 705 1655 740 1667 766 1717 766 1730 748 1760 735 1795 731 1820 748 1838 765 1836 795 1842 835 1857 895 1840 915 1815 935 1817 1000 1826 1070 1812 1100 1700 1100 1590 1072 1590 1150 1520 1165 1450 1145 1420 1130 1403 1080 1370 920 1370 850 1385 812 1365 790 1350 720 1365 680 1403 600 1365 570 1385 540 1400 490 1370 430 1350 370 1373 335 1362 320 1360 280 1330 240 1355 190 1400 140Z'
const yellow = [
  'M1295 563L1345 580 1370 570 1403 600 1385 640 1365 680 1310 630 1295 595ZM1370 925L1400 905 1440 903 1460 925 1455 945 1470 970 1475 1005 1510 1025 1570 1045 1578 1065 1520 1060 1460 1058 1400 1080 1385 1050 1350 1010 1350 985ZM1465 930L1510 912 1555 930 1590 960 1602 1007 1530 985 1490 945ZM1800 850L1857 835 1857 895 1830 865 1800 865ZM178 1382L210 1340 250 1318 295 1288 320 1300 322 1378 280 1385 257 1400 225 1385ZM153 808L175 815 210 850 218 875 195 878ZM708 115L740 105 755 118 720 155 703 150Z',
  'M1578 1065L1670 1070 1672 1010 1683 975 1710 970 1738 1003 1723 1015 1770 1103 1797 1077 1812 1095 1812 1130 1803 1150 1800 1235 1748 1325 1760 1345 1785 1360 1805 1375 1820 1362 1855 1385 1857 1430 1860 1500 1853 1605 1862 1620 1850 1690 1832 1745 1833 1790 1828 1850 1788 1920 1765 1960 1738 1985 1738 2025 1712 2050 1708 2062 1728 2058 1742 2075 1715 2105 1680 2115 1618 2113 1610 2060 1585 2030 1597 1990 1575 1950 1590 1880 1595 1830 1650 1770 1635 1720 1615 1680 1605 1630 1585 1615 1555 1628 1530 1620 1535 1570 1545 1500 1530 1430 1535 1350 1530 1340 1465 1335 1455 1290 1430 1250 1430 1200 1440 1150 1450 1145 1520 1118 1572 1130 1520 1165 1588 1150Z',
]
const inlets = 'M1572 1370L1585 1375 1620 1445 1625 1462 1645 1465 1652 1500 1625 1530 1643 1573 1595 1565 1560 1530 1590 1518 1565 1495 1578 1470Z'
const red = 'M1385 83L1420 93 1445 105 1462 125 1415 145 1395 185 1355 190 1358 150 1375 130ZM1455 178L1445 205 1407 268 1398 235 1405 205 1425 185ZM1407 315L1430 330 1460 345 1460 367 1435 373 1412 372Z'
const blueTop = 'M702 545L715 505 740 495 738 525 715 560ZM1540 1760L1645 1770 1595 1828ZM1468 1380L1480 1340 1505 1325 1528 1335 1510 1370 1490 1387ZM1705 1258L1750 1265 1800 1205 1798 1235 1750 1305 1745 1295 1712 1285ZM1722 1360L1750 1330 1765 1345 1735 1355ZM1782 1575L1793 1562 1812 1585 1790 1600ZM1833 1640L1862 1620 1855 1670ZM1810 1750L1832 1740 1830 1770ZM1812 1810L1832 1803 1828 1840ZM1752 1908L1785 1860 1817 1868 1785 1920ZM1837 1408L1857 1385 1857 1400Z'
const greenTop = 'M390 488L425 545 368 530ZM490 245L520 243 518 262 492 280ZM725 625L757 632 760 665 745 680 740 705 725 680ZM1180 2030L1200 2045 1220 2032 1218 2070 1180 2085Z'
const holes = 'M885 448L895 500 892 580 920 612 912 650 892 683 950 690 945 735 985 735 990 712 1040 725 1110 750 1120 735 1118 710 1110 690 1180 675 1230 635 1240 595 1262 560 1255 430 1245 405 1200 395 1150 404 1040 410 1018 395 1000 425 940 448ZM772 215L785 190 788 180 800 190 810 180 812 188 840 175 855 190 868 192 868 205 880 225 885 245 888 262 860 265 840 270 832 265 820 285 810 270 800 262 785 245 772 235ZM755 320L775 326 790 318 788 330 797 330 792 395 803 405 798 430 765 440 755 470 735 470 720 505 700 515 680 545 670 545 675 510 695 475 725 455 740 435 752 400 758 350ZM605 665L632 650 655 670 720 678 722 705 745 715 735 765 730 795 690 795 650 780 620 790 590 778 600 740ZM335 915L360 903 410 885 445 862 465 880 500 925 515 905 550 895 590 905 575 945 560 985 540 1020 535 1105 548 1130 520 1130 470 1120 458 1100 470 1070 475 990 485 960 445 948 440 960 415 968 415 1030 430 1045 410 1045 392 1025 387 940 340 930ZM1262 730L1285 730 1290 780 1310 800 1300 830 1310 885 1280 890 1285 925 1270 920 1255 880 1235 845 1260 800 1252 770ZM1188 90L1203 90 1198 150 1207 190 1200 250 1170 285 1150 290 1160 200 1145 140 1185 135ZM1175 270L1200 268 1210 285 1235 310 1215 305 1198 315 1195 295 1180 290ZM595 2030L610 2015 610 1990 625 1970 650 1975 662 2000 680 2008 655 2028 660 2055 645 2060 630 2035ZM720 690L740 700 735 680Z'

const speckSpots = '660 210 685 212 715 212 595 310 565 338 685 328 590 375 605 378 680 388 352 415 415 432 415 465 470 480 485 505 510 540 420 548 365 255 300 280 318 312 285 385 455 295 515 265 910 98 985 152 310 490 325 510 285 635 275 670 340 620 390 735 370 755 375 780 450 790 470 810 480 840 480 855 868 738 900 712 1000 750 905 705 98 940 125 1005 155 1105 125 1082 170 1075 560 995 613 940 1180 140 1200 145 1215 135 1165 215 1195 262 1170 290 1255 150 1300 210 1315 200 1330 195 1235 240 1205 345 1195 375 1263 368 1280 362 1300 365 1315 368 1285 405 1355 403 1325 550 1380 195 1385 252 1460 305 1440 325 1488 310 1398 370 1440 440 1455 435 1437 496 1430 620 1515 685 1530 700 1545 675 1440 720 1478 748 1418 755 1445 838 1375 700 1280 695 1310 720 1240 815 1295 865 1300 1005 1335 1085 1480 1015 1455 1045 1490 1045 1490 1065 1530 940 1670 1115 1668 1135 1700 1070 1510 1175 1608 1190 1655 1180 1770 1190 1470 1240 1580 1245 1605 1290 1608 1310 1605 1320 1510 1325 1545 1380 1610 1370 1750 1380 1730 1410 1710 1445 1665 1205 1810 1565 1765 1568 1713 1670 1775 1660 1790 1668 1757 1695 1778 1712 1808 1730 1822 1690 1695 1785 1720 1798 1657 1818 1763 1860 1752 1905 1652 1908 1615 1930 1500 2000 1530 1960 1272 1905 1275 1920 1268 2010 1395 1780 1372 1880 1360 2075 1410 2077 1370 2140 1078 1885 970 1852 1003 1985 1295 1780 1200 2055 1195 2075 400 1420 410 1268 410 1468 460 1495 455 1510 465 1550 170 1325 170 1525 320 1530 335 1570 340 1575 342 1648 355 1682 213 1685 415 1715 520 1748 510 1820 450 1825 70 1730 155 1780 162 1790 225 1845 245 1870 310 1850 325 1865 530 1870 595 1905 680 1930 375 1960 425 1970 290 1960 400 2000 495 2000 535 1980 455 2035 530 2040 685 2115 770 1703 785 1712 700 1748 810 1825 890 1835 830 2040 900 1950 715 1885 1505 1840 1485 1842 905 1948 370 1818 385 1797 520 1225 540 1215 490 1195 530 1170 460 1165'.split(' ').map(Number)
const speckForms = ['h6v3h6v3h-3v3h-3v-3h-6zm15 6h3v3h-3z', 'v-6h3v3h3v6h6v3h-3v6h-3v-6h-6zm-6 15h3v3h-3z', 'h3v-3h9v3h-3v6h-3v3h-6zm18-3h3v3h-3zm3 9h3v3h-3z', 'h3v-6h3v9h6v3h-9v6h-3v-3h-3z', 'h3v3h3v-3h3v3h-3v3h-6zm-9 9h6v3h-6z']
const specks = speckSpots.reduce((d, v, i, all) => (i % 2 ? d : `${d}M${v - 6} ${all[i + 1] - 3}${speckForms[(i / 2) % 5]}`), '')
</script>

<template>
  <div class="window">
    <header class="titlebar">
      <Glyph name="qgis" class="logo" />
      <h1>*제목 없는 프로젝트 — QGIS</h1>
      <div class="winbtns">
        <button aria-label="최소화"><Glyph name="min" class="s12" /></button>
        <button aria-label="이전 크기로"><Glyph name="restore" class="s12" /></button>
        <button aria-label="닫기"><Glyph name="quit" class="s12" /></button>
      </div>
    </header>

    <nav class="menubar">
      <button v-for="[label, key] in menus" :key="label">{{ label }}<template v-if="key"> (<u>{{ key }}</u>)</template></button>
    </nav>

    <div v-for="(row, r) in rows" :key="r" class="toolbar">
      <div v-for="(group, g) in row" :key="g" class="group">
        <span class="grip"></span>
        <template v-for="(tool, t) in group" :key="t">
          <span v-if="tool.name === '|'" class="sep"></span>
          <template v-else-if="tool.name === 'units'">
            <span class="spin tolerance">
              <input aria-label="허용 오차" value="12,00" disabled />
              <span class="steps"><button class="up" aria-label="증가" disabled></button><button class="down" aria-label="감소" disabled></button></span>
            </span>
            <span class="combo unit">
              <select aria-label="단위" disabled><option>미터</option></select>
            </span>
          </template>
          <template v-else>
            <button class="tool" :class="{ off: tool.off, on: tool.on }" :aria-label="tool.name">
              <Glyph :name="tool.name" class="s24" /><i v-if="tool.menu" class="corner"></i>
            </button>
            <button v-if="tool.drop" class="drop" :class="{ off: tool.off }" :aria-label="tool.name + ' 메뉴'"></button>
          </template>
        </template>
      </div>
    </div>

    <main class="body">
      <aside class="side">
        <span class="hgrip"></span>
        <div v-for="tool in sideTools" :key="tool.name" class="sideitem">
          <button class="tool" :aria-label="tool.name"><Glyph :name="tool.name" class="s24" /></button>
          <button v-if="tool.drop" class="drop" :aria-label="tool.name + ' 메뉴'"></button>
        </div>
      </aside>

      <div class="docks">
        <section class="dock">
          <div class="dockhead"><h2>탐색기</h2><button aria-label="분리"><Glyph name="float" class="s12" /></button><button aria-label="닫기"><Glyph name="close" class="s12" /></button></div>
          <div class="docktools">
            <button v-for="n in ['addl', 'refresh', 'funnel', 'collapse', 'info']" :key="n" :aria-label="n"><Glyph :name="n" class="s15" /></button>
          </div>
          <div class="box scroller">
            <ul class="files">
              <li v-for="(f, i) in files" :key="i" :class="['row', 'd' + f.depth, { hover: f.hover, mixed: f.mixed }]">
                <i class="tw" :class="f.arrow"></i><Glyph :name="f.icon" class="s18" /><span>{{ f.label }}</span>
              </li>
            </ul>
            <div class="vbar"><button class="sb up" aria-label="위로"></button><span class="gapa"></span><span class="thumb"></span><span class="gapb"></span><button class="sb down" aria-label="아래로"></button></div>
          </div>
        </section>
        <span class="split"></span>
        <section class="dock">
          <div class="dockhead"><h2>공간 북마크 관리자</h2><button aria-label="분리"><Glyph name="float" class="s12" /></button><button aria-label="닫기"><Glyph name="close" class="s12" /></button></div>
          <div class="docktools">
            <button aria-label="확대"><Glyph name="zbook" class="s15" /></button>
            <button aria-label="추가"><Glyph name="bkm" class="s15" /></button>
            <button aria-label="삭제"><Glyph name="trashRed" class="s15" /></button>
            <button aria-label="공유"><Glyph name="share" class="s15" /><i class="corner"></i></button>
          </div>
          <div class="box">
            <div class="tablewrap">
              <table>
                <thead><tr><th class="sorted">이름</th><th>그룹</th><th>X 최소값</th></tr></thead>
                <tbody></tbody>
              </table>
            </div>
            <div class="hbar"><button class="sb left" aria-label="왼쪽"></button><span class="thumb"></span><span class="track"></span><button class="sb right" aria-label="오른쪽"></button></div>
          </div>
        </section>
        <span class="split"></span>
        <section class="dock">
          <div class="dockhead"><h2>레이어</h2><button aria-label="분리"><Glyph name="float" class="s12" /></button><button aria-label="닫기"><Glyph name="close" class="s12" /></button></div>
          <div class="docktools">
            <button aria-label="스타일"><Glyph name="brush" class="s15" /></button>
            <button aria-label="그룹 추가"><Glyph name="addgroup" class="s15" /></button>
            <button aria-label="표시"><Glyph name="eye" class="s15" /><i class="corner"></i></button>
            <button aria-label="필터"><Glyph name="funnel" class="s15" /><i class="corner"></i></button>
            <button class="off" aria-label="표현식 필터"><Glyph name="epsf" class="s15" /></button>
            <button class="drop off" aria-label="표현식 메뉴"></button>
            <button aria-label="모두 펼치기"><Glyph name="expand" class="s15" /></button>
            <button aria-label="모두 접기"><Glyph name="collapse" class="s15" /></button>
            <button aria-label="제거"><Glyph name="removel" class="s15" /></button>
          </div>
          <div class="box">
            <ul class="layers">
              <li class="row picked"><i class="tw right"></i><input id="l1" type="checkbox" /><Glyph name="checker" class="s16" /><label for="l1"><em>11111</em></label></li>
              <li class="row"><i class="tw down"></i><input id="l2" type="checkbox" checked /><Glyph name="checker" class="s16" /><label for="l2"><b>수질등급도_대전권1</b></label></li>
              <li class="row band">밴드 1 (Gray)</li>
              <li v-for="[n, c] in classes" :key="n" class="row legend"><span class="swatch" :style="{ background: c }"></span>{{ n }}</li>
            </ul>
          </div>
        </section>
      </div>

      <span class="vsplit"></span>
      <section class="canvas">
        <svg viewBox="-375 -27 2655 2358" role="img" aria-label="수질등급도">
          <defs>
            <filter id="rough" x="0" y="0" width="1" height="1">
              <feTurbulence type="fractalNoise" baseFrequency="0.09" numOctaves="3" seed="4" />
              <feDisplacementMap in="SourceGraphic" scale="12" xChannelSelector="R" yChannelSelector="G" />
            </filter>
          </defs>
          <g filter="url(#rough)" shape-rendering="crispEdges">
            <path :d="land + lake" fill="#50f091" fill-rule="evenodd" />
            <path v-for="(d, i) in blue" :key="'b' + i" :d="d" fill="#6d9bdf" />
            <path :d="purple" fill="#b143cd" />
            <path v-for="(d, i) in yellow" :key="'y' + i" :d="d" fill="#b7df14" />
            <path :d="inlets" fill="#b143cd" />
            <path :d="red" fill="#dc0f0f" />
            <path :d="blueTop" fill="#6d9bdf" />
            <path :d="greenTop" fill="#50f091" />
            <path :d="holes" fill="#fff" />
          </g>
          <path :d="specks" fill="#fff" shape-rendering="crispEdges" />
        </svg>
      </section>
      <span class="vsplit"></span>

      <aside class="toolbox">
        <div class="dockhead"><h2>공간 처리 툴박스</h2><button aria-label="분리"><Glyph name="float" class="s12" /></button><button aria-label="닫기"><Glyph name="close" class="s12" /></button></div>
        <div class="docktools">
          <button aria-label="모델"><Glyph name="models" class="s15" /><i class="corner"></i></button>
          <button aria-label="스크립트"><Glyph name="pythonSmall" class="s15" /><i class="corner"></i></button>
          <button aria-label="이력"><Glyph name="clock" class="s15" /></button>
          <button aria-label="결과"><Glyph name="doc" class="s15" /></button>
          <span class="sep"></span>
          <button class="off" aria-label="편집"><Glyph name="editp" class="s15" /></button>
          <span class="sep"></span>
          <button aria-label="옵션"><Glyph name="wrench" class="s15" /></button>
        </div>
        <label class="find"><Glyph name="search" class="s12" /><input type="search" placeholder="검색 …" aria-label="검색" /></label>
        <div class="box scroller algbox">
          <ul class="algs">
            <li v-for="a in algs" :key="a.label" class="row" :class="{ latin: a.latin }"><i class="tw" :class="a.open ? 'down' : 'right'"></i><Glyph :name="a.icon" class="s20" /><span>{{ a.label }}</span></li>
            <li class="row sub latin"><i class="tw right"></i><span>gcg</span></li>
            <li class="row sub"><i class="tw down"></i><span>대전</span></li>
            <li class="row leaf"><Glyph name="model2" class="s20" /><span>수질_작업</span></li>
          </ul>
          <div class="vbar"><button class="sb up" aria-label="위로"></button><span class="gapa"></span><span class="thumb"></span><button class="sb down" aria-label="아래로"></button></div>
        </div>
        <p class="notice">툴박스에 더 많은 알고리즘을 추가해서, <a href="#">추가 제공자를 활성화할 수 있습니다.</a> <a href="#" class="dismiss">[닫기]</a></p>
      </aside>
    </main>

    <footer class="status">
      <label class="find locate"><Glyph name="search" class="s12" /><input type="search" placeholder="위치를 찾으려면 입력하세요 (Ctrl+K)" aria-label="위치 찾기" /></label>
      <span class="ready">준비</span>
      <label for="coord">좌표</label><input id="coord" class="coord" value="218474,318494" />
      <button aria-label="범위 전환"><Glyph name="mouse" class="s20" /></button>
      <label for="scale" class="scalelabel">축척</label>
      <span class="combo scale"><select id="scale"><option>1:198851</option></select></span>
      <button class="lock" aria-label="축척 고정"><Glyph name="lock" class="s20" /></button>
      <label for="magn">확대경</label>
      <span class="spin magn"><input id="magn" value="100%" /><span class="steps"><button class="up" aria-label="증가"></button><button class="down" aria-label="감소"></button></span></span>
      <label for="rot">회전</label>
      <span class="spin rot"><input id="rot" value="0.0 °" /><span class="steps"><button class="up" aria-label="증가"></button><button class="down" aria-label="감소"></button></span></span>
      <input id="render" type="checkbox" checked /><label for="render" class="renderlabel">렌더링</label>
      <button class="crs"><Glyph name="crs" class="s20" />알 수 없는 좌표계</button>
      <button aria-label="메시지"><Glyph name="chat" class="s20" /></button>
    </footer>
  </div>
</template>

<style>
body { margin: 0; }
</style>

<style scoped>
.window {
  display: flex; flex-direction: column; height: 100vh; overflow: hidden;
  background: #efefef; color: #000;
  font: 350 16px/22px "Noto Sans CJK KR", "Noto Sans", sans-serif;
}
.window * { box-sizing: border-box; }
button { border: 0; padding: 0; background: none; font: inherit; color: inherit; }
input, select { font: inherit; color: inherit; border: 0; padding: 0; background: none; min-width: 0; outline: 0; }
ul, h1, h2, p { margin: 0; padding: 0; list-style: none; font: inherit; }
svg { flex: none; display: block; }
.s12 { width: 12px; height: 12px; }
.s15 { width: 16px; height: 16px; }
.s16 { width: 17px; height: 17px; }
.s18 { width: 18px; height: 18px; }
.s20 { width: 20px; height: 20px; }
.s24 { width: 24px; height: 24px; }
.logo { width: 20px; height: 24px; margin: 0 5px 0 2px; }

.titlebar { flex: none; display: flex; align-items: center; height: 29px; padding-bottom: 2px; background: #fff; }
.titlebar h1 { flex: 1; }
.winbtns { display: flex; margin-right: 3px; }
.winbtns button { display: grid; place-items: center; width: 59px; height: 26px; }

.menubar { flex: none; display: flex; height: 25px; padding-left: 3px; border-bottom: 1px solid #cfcfcf; }
.menubar button { padding: 0 8px; white-space: nowrap; line-height: 22px; height: 23px; }

.toolbar { flex: none; display: flex; align-items: center; height: 39px; border-bottom: 1px solid #b5b5b5; background: linear-gradient(#fafafa, #eee); }
.toolbar:nth-of-type(4) { height: 38px; }
.group { display: flex; align-items: center; }
.grip { width: 4px; height: 18px; margin: 0 4px 0 10px; background: radial-gradient(circle, #b0b0b0 1px, transparent 1px) 0 0 / 3px 3px; }
.group:first-child .grip { margin-left: 6px; }
.tool { position: relative; display: grid; place-items: center; width: 32px; height: 31px; margin-right: 1px; border-radius: 3px; }
.tool.on { background: #dcdcdc; border: 1px solid #a8a8a8; }
.off > svg { opacity: .38; filter: grayscale(.7); }
.sep { width: 1px; height: 20px; margin: 0 4px; background: #ccc; }
.drop { width: 15px; height: 20px; display: grid; place-items: center; }
.drop::before { content: ""; border: 5px solid transparent; border-top: 6px solid #555; border-bottom: 0; }
.drop.off::before { border-top-color: #999; }
.corner { position: absolute; right: 0; bottom: 1px; border: 5px solid transparent; border-top: 6px solid #555; border-bottom: 0; }
.off > .corner { opacity: .8; }

.spin { display: flex; height: 22px; border: 1px solid #aaa; border-radius: 3px; background: #fff; }
.spin input { flex: 1; width: 0; padding-left: 5px; }
.steps { display: flex; flex-direction: column; width: 17px; border-left: 1px solid #bbb; background: #f7f7f7; border-radius: 0 3px 3px 0; }
.steps button { flex: 1; display: grid; place-items: center; }
.steps button::before { content: ""; border: 4px solid transparent; }
.steps .up::before { border-bottom: 5px solid #555; border-top: 0; }
.steps .down::before { border-top: 5px solid #555; border-bottom: 0; }
.tolerance { width: 114px; margin-right: 2px; background: #f2f2f2; color: #888; font-weight: 300; }
.combo { position: relative; display: flex; height: 23px; border: 1px solid #b5b5b5; border-radius: 3px; background: #fff; }
.combo select { appearance: none; flex: 1; padding-left: 4px; }
.combo::after { content: ""; position: absolute; right: 9px; top: 8px; border: 5px solid transparent; border-top: 6px solid #666; border-bottom: 0; pointer-events: none; }
.unit { width: 121px; margin-right: 1px; background: #f5f5f5; color: #888; font-weight: 300; }
.unit select { opacity: 1; }

.body { flex: 1; display: flex; min-height: 0; }
.side { flex: none; width: 55px; padding-top: 7px; border-right: 1px solid #b5b5b5; background: linear-gradient(90deg, #fafafa, #ededed); }
.hgrip { display: block; width: 17px; height: 4px; margin: 0 0 4px 20px; background: radial-gradient(circle, #b0b0b0 1px, transparent 1px) 0 0 / 3px 3px; }
.sideitem { display: flex; align-items: center; height: 32px; padding-left: 4px; }
.sideitem .tool { margin: 0; }

.docks { flex: none; width: 372px; display: grid; grid-template-rows: 259fr 6px 256fr 6px 262fr; grid-template-columns: 100%; }
.dock { display: flex; flex-direction: column; min-height: 0; }
.dockhead { flex: none; display: flex; align-items: center; gap: 2px; height: 22px; padding: 0 2px 0 4px; }
.dockhead h2 { flex: 1; line-height: 20px; height: 22px; }
.docktools { flex: none; display: flex; align-items: center; height: 29px; padding: 0 0 3px 4px; }
.docktools button { position: relative; display: grid; place-items: center; width: 25px; height: 24px; }
.docktools button.drop { width: 19px; }
.docktools .corner { bottom: 3px; }
.docktools .sep { margin: 0 4px; }
.split { width: 17px; height: 3px; margin: 1px 0 0 179px; background: repeating-linear-gradient(90deg, #b5b5b5 0 1px, transparent 1px 3px) center / 100% 1px no-repeat; }
.box { flex: 1; display: flex; flex-direction: column; min-height: 0; overflow: hidden; border: 1px solid #b5b5b5; background: #fff; }
.box.scroller { flex-direction: row; }
.row { display: flex; align-items: center; height: 22px; white-space: nowrap; }
.tw { flex: none; width: 10px; height: 10px; display: grid; place-items: center; }
.tw::before { content: ""; }
.tw.right::before { border: 5px solid transparent; border-left: 6px solid #555; border-right: 0; }
.tw.down::before { border: 5px solid transparent; border-top: 6px solid #555; border-bottom: 0; }
.files { width: max-content; height: 100%; font-size: 14px; }
.files .row { padding: 0 3px 0 2px; }
.files .d1 { padding-left: 18px; }
.files .mixed { font-size: 15px; }
.files svg { margin: 0 7px 0 8px; }
.hover { background: #efefef; }
.vbar { flex: none; display: flex; flex-direction: column; width: 17px; margin-left: auto; border-left: 1px solid #b5b5b5; background: #e5e5e5; }
.sb { flex: none; display: grid; place-items: center; width: 16px; height: 16px; background: #fafafa; }
.sb::before { content: ""; border: 5px solid transparent; }
.sb.up::before { border-bottom: 6px solid #555; border-top: 0; }
.sb.down::before { border-top: 6px solid #555; border-bottom: 0; }
.sb.left::before { border-right: 6px solid #555; border-left: 0; }
.sb.right::before { border-left: 6px solid #555; border-right: 0; }
.vbar .gapa { flex: 18; border-top: 1px solid #b5b5b5; }
.vbar .thumb { flex: 54; border: solid #b5b5b5; border-width: 1px 0; background: linear-gradient(90deg, #fefefe, #f2f2f2); }
.vbar .gapb { flex: 101; border-bottom: 1px solid #b5b5b5; }
.tablewrap { flex: 1; }
table { width: 100%; table-layout: fixed; border-collapse: collapse; }
th { height: 24px; padding: 0 2px 0 3px; text-align: left; font-weight: 350; border-bottom: 1px solid #b5b5b5; border-right: 1px solid #c0c0c0; background: linear-gradient(#fefefe, #ececec); }
th:nth-child(1), th:nth-child(2) { width: 125px; }
th:last-child { border-right: 0; }
.sorted::after { content: ""; float: right; margin: 8px 4px 0 0; border: 5px solid transparent; border-bottom: 6px solid #555; border-top: 0; }
.hbar { flex: none; display: flex; height: 17px; border-top: 1px solid #b5b5b5; background: #e5e5e5; }
.hbar .thumb { flex: 125; border: solid #b5b5b5; border-width: 0 1px; background: linear-gradient(#fefefe, #f2f2f2); }
.hbar .track { flex: 212; border-right: 1px solid #b5b5b5; }

input[type="checkbox"] { appearance: none; flex: none; display: grid; place-items: center; width: 17px; height: 17px; margin: 0; border: 1px solid #b5b5b5; background: #fff; }
input[type="checkbox"]:checked::before { content: ""; width: 11px; height: 12px; background: #000; clip-path: polygon(0 50%, 20% 48%, 35% 74%, 80% 0, 100% 0, 42% 100%, 28% 100%); }
.layers .row { padding-left: 7px; }
.layers input { margin: 0 8px 0 11px; }
.layers svg { margin-right: 7px; }
.picked { background: linear-gradient(#1a86dc, #0a78d8); color: #fff; }
.picked svg { opacity: .7; }
.picked em { font-weight: 700; text-decoration: underline; }
.layers .band { height: 20px; padding-left: 54px; }
.layers .legend { padding-left: 53px; gap: 6px; }
.swatch { width: 16px; height: 16px; }

.vsplit { flex: none; width: 7px; background: repeating-linear-gradient(#b5b5b5 0 1px, transparent 1px 3px) center / 1px 17px no-repeat; }
.canvas { flex: 1; min-width: 0; margin-top: 1px; border: 1px solid #b5b5b5; background: #fff; }
.canvas svg { width: 100%; height: 100%; }

.toolbox { flex: none; width: 592px; display: flex; flex-direction: column; }
.find { flex: none; display: flex; align-items: center; gap: 8px; height: 24px; padding-left: 8px; border: 1px solid #aaa; border-radius: 3px; background: #fff; }
.find input { flex: 1; font-weight: 300; }
.find input::placeholder { color: #777; opacity: 1; }
.algbox { margin-top: -1px; }
.algs { flex: 1; }
.algs .row { padding-left: 7px; }
.algs .latin { font-size: 15px; }
.algs svg { margin: 0 6px 0 11px; }
.algs .sub { height: 20px; padding-left: 32px; gap: 11px; }
.algs .leaf { padding-left: 66px; background: #efefef; }
.algs .leaf svg { margin: 0 6px 0 12px; }
.algbox .gapa { flex: 21; }
.algbox .thumb { flex: 621; }
.notice { flex: none; height: 38px; padding: 0 14px 0 4px; border: 1px solid #3a79bd; background: #56a9ff; color: #fff; font-weight: 300; line-height: 17px; overflow: hidden; word-break: break-all; }
.notice a { color: #00c; }
.dismiss { margin-left: 42px; }

.status { flex: none; display: flex; align-items: center; height: 32px; padding: 0 8px 0 4px; font-size: 14px; }
.status > button { display: flex; align-items: center; }
.locate { width: 437px; margin-right: 9px; font-size: 16px; }
.ready { flex: 1; }
.coord { width: 104px; height: 23px; margin: 0 4px; padding-left: 6px; border: 1px solid #aaa; border-radius: 3px; background: #fff; font-size: 13px; }
.status .combo, .status .spin { font-size: 13px; }
.scalelabel { margin: 0 4px 0 13px; }
.combo.scale { width: 102px; }
.lock { margin: 0 8px 0 11px; }
.magn { width: 99px; margin: 0 9px 0 4px; }
.rot { width: 95px; margin: 0 7px 0 8px; }
.renderlabel { margin: 0 17px 0 6px; }
.crs { gap: 4px; margin-right: 20px; }
</style>
